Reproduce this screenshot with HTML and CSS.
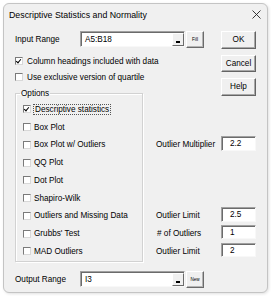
FILE: index.html
```html
<!DOCTYPE html>
<html lang="en">
  <head>
    <meta charset="UTF-8" />
    <title>Descriptive Statistics and Normality</title>
    <link rel="stylesheet" href="styles.css">
  </head>
  <body>
    <div class="dialog">
      <div class="titlebar">
        <span class="title">Descriptive Statistics and Normality</span>
        <svg class="close" width="9" height="9" viewBox="0 0 9 9">
          <path d="M0.5 0.5 L8.5 8.5 M8.5 0.5 L0.5 8.5" stroke="#222" stroke-width="0.9" fill="none" />
        </svg>
      </div>

      <div class="content">
        <div class="top">
          <div class="top-left">
            <div class="range-row">
              <span class="label">Input Range</span>
              <div class="refedit">
                <span class="ref-value">A5:B18</span>
                <span class="ref-btn"><i></i></span>
              </div>
              <span class="tiny-btn">Fill</span>
            </div>
            <div class="check"><span class="box checked"></span>Column headings included with data</div>
            <div class="check"><span class="box"></span>Use exclusive version of quartile</div>
          </div>
          <div class="buttons">
            <span class="btn">OK</span>
            <span class="btn">Cancel</span>
            <span class="btn">Help</span>
          </div>
        </div>

        <div class="middle">
          <fieldset class="options">
            <legend>Options</legend>
            <div class="opt"><span class="box checked"></span><span class="focus">Descriptive statistics</span></div>
            <div class="opt"><span class="box"></span>Box Plot</div>
            <div class="opt"><span class="box"></span>Box Plot w/ Outliers</div>
            <div class="opt"><span class="box"></span>QQ Plot</div>
            <div class="opt"><span class="box"></span>Dot Plot</div>
            <div class="opt"><span class="box"></span>Shapiro-Wilk</div>
            <div class="opt"><span class="box"></span>Outliers and Missing Data</div>
            <div class="opt"><span class="box"></span>Grubbs' Test</div>
            <div class="opt"><span class="box"></span>MAD Outliers</div>
          </fieldset>

          <div class="params">
            <div class="param row-3"><span>Outlier Multiplier</span><span class="field">2.2</span></div>
            <div class="param row-7"><span>Outlier Limit</span><span class="field">2.5</span></div>
            <div class="param row-8"><span class="indent"># of Outliers</span><span class="field">1</span></div>
            <div class="param row-9"><span>Outlier Limit</span><span class="field">2</span></div>
          </div>
        </div>

        <div class="range-row output">
          <span class="label">Output Range</span>
          <div class="refedit">
            <span class="ref-value">I3</span>
            <span class="ref-btn"><i></i></span>
          </div>
          <span class="tiny-btn">New</span>
        </div>
      </div>
    </div>
  </body>
</html>
```

FILE: styles.css
```css
body {
  margin: 0;
  padding: 3px;
  background-color: #ffffff;
  font-family: "Liberation Sans", Arial, sans-serif;
  font-size: 8.2px;
  color: #000;
}

.dialog {
  box-sizing: border-box;
  width: 265px;
  height: 290px;
  background-color: #f0f0f0;
  border: 1px solid #c4c4c4;
  border-radius: 6px;
  box-shadow: 1px 1px 3px rgba(0, 0, 0, 0.12);
  display: flex;
  flex-direction: column;
}

.titlebar {
  height: 21px;
  display: flex;
  align-items: center;
  justify-content: space-between;
  padding: 0 6px 0 5px;
}

.title {
  font-size: 8.8px;
}

.content {
  padding: 6px 11px 0 11px;
}

.top {
  display: flex;
  justify-content: space-between;
}

.top-left {
  width: 190px;
}

.range-row {
  display: flex;
  align-items: center;
  height: 17px;
}

.range-row .label {
  width: 65px;
}

.refedit {
  box-sizing: border-box;
  width: 105px;
  height: 16px;
  align-self: flex-start;
  display: flex;
  background: #fff;
  border: 1px solid;
  border-color: #a0a0a0 #f8f8f8 #f8f8f8 #a0a0a0;
  box-shadow: inset 1px 1px #6b6b6b;
}

.ref-value {
  flex: 1;
  padding: 2px 0 0 4px;
  line-height: 11px;
}

.ref-btn {
  box-sizing: border-box;
  width: 12px;
  margin: 1px 0 0 0;
  background: #f0f0f0;
  border: 1px solid;
  border-color: #fff #6b6b6b #6b6b6b #fff;
  position: relative;
}

.ref-btn i {
  position: absolute;
  left: 3px;
  bottom: 2px;
  width: 4px;
  height: 2px;
  background: #000;
}

.tiny-btn {
  box-sizing: border-box;
  width: 18px;
  height: 17px;
  margin-left: 1px;
  display: flex;
  align-items: center;
  justify-content: center;
  font-size: 4.6px;
  border: 1px solid;
  border-color: #fff #6b6b6b #6b6b6b #fff;
  box-shadow: inset -1px -1px #b4b4b4;
}

.check {
  display: flex;
  align-items: center;
  height: 16px;
}

.top-left .range-row {
  margin-bottom: 5px;
}

.box {
  box-sizing: border-box;
  width: 8px;
  height: 8px;
  margin-right: 4px;
  background: #fff;
  border: 1px solid;
  border-color: #7a7a7a #d8d8d8 #d8d8d8 #7a7a7a;
  position: relative;
}

.box.checked::after {
  content: "";
  position: absolute;
  left: 1px;
  top: 0px;
  width: 2px;
  height: 4px;
  border: solid #000;
  border-width: 0 1.3px 1.3px 0;
  transform: rotate(40deg);
}

.buttons {
  width: 35px;
  display: flex;
  flex-direction: column;
  gap: 6px;
  margin-bottom: -8px;
}

.btn {
  box-sizing: border-box;
  height: 17.5px;
  display: flex;
  align-items: center;
  justify-content: center;
  border: 1px solid;
  border-color: #fff #646464 #646464 #fff;
  box-shadow: inset -1px -1px #a8a8a8;
}

.middle {
  display: flex;
  gap: 13px;
}

.options {
  box-sizing: border-box;
  width: 128px;
  margin: 1px 0 0 0;
  padding: 2px 0 1px 4px;
  border: 1px solid #d2d2d2;
  box-shadow: 1px 1px #fff, inset 1px 1px #fff;
}

.options legend {
  padding: 0 1px;
  line-height: 10px;
}

.opt {
  display: flex;
  align-items: center;
  height: 17.75px;
  padding-left: 3px;
}

.opt .box {
  margin-right: 3px;
}

.focus {
  padding: 0 1px;
  line-height: 9px;
  outline: 1px dotted #555;
}

.params {
  flex: 1;
  padding-top: 13px;
  display: grid;
  grid-template-rows: repeat(9, 17.75px);
  align-content: start;
}

.param {
  display: flex;
  justify-content: space-between;
  align-items: center;
}

.row-3 { grid-row: 3; }
.row-7 { grid-row: 7; }
.row-8 { grid-row: 8; }
.row-9 { grid-row: 9; }

.indent {
  padding-left: 1px;
}

.field {
  box-sizing: border-box;
  width: 35px;
  height: 14.5px;
  align-self: flex-start;
  padding: 2px 0 0 8px;
  line-height: 10px;
  background: #fff;
  border: 1px solid;
  border-color: #a0a0a0 #f8f8f8 #f8f8f8 #a0a0a0;
  box-shadow: inset 1px 1px #6b6b6b;
}

.output {
  margin-top: 9px;
}
```
